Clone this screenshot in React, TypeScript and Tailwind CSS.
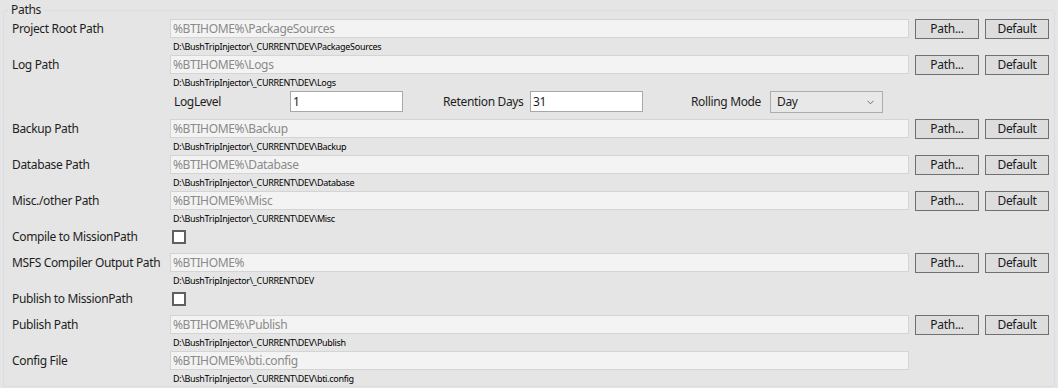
import React from 'react';

const font = { fontFamily: '"Noto Sans", "Open Sans", sans-serif' };

type PathItem = {
  kind: 'path';
  label: string;
  value: string;
  resolved: string;
  buttons: boolean;
};
type CheckItem = { kind: 'check'; label: string };
type LogItem = { kind: 'log' };
type Row = PathItem | CheckItem | LogItem;

const base = 'D:\\BushTripInjector\\_CURRENT\\DEV';

const rows: Row[] = [
  { kind: 'path', label: 'Project Root Path', value: '%BTIHOME%\\PackageSources', resolved: base + '\\PackageSources', buttons: true },
  { kind: 'path', label: 'Log Path', value: '%BTIHOME%\\Logs', resolved: base + '\\Logs', buttons: true },
  { kind: 'log' },
  { kind: 'path', label: 'Backup Path', value: '%BTIHOME%\\Backup', resolved: base + '\\Backup', buttons: true },
  { kind: 'path', label: 'Database Path', value: '%BTIHOME%\\Database', resolved: base + '\\Database', buttons: true },
  { kind: 'path', label: 'Misc./other Path', value: '%BTIHOME%\\Misc', resolved: base + '\\Misc', buttons: true },
  { kind: 'check', label: 'Compile to MissionPath' },
  { kind: 'path', label: 'MSFS Compiler Output Path', value: '%BTIHOME%', resolved: base, buttons: true },
  { kind: 'check', label: 'Publish to MissionPath' },
  { kind: 'path', label: 'Publish Path', value: '%BTIHOME%\\Publish', resolved: base + '\\Publish', buttons: true },
  { kind: 'path', label: 'Config File', value: '%BTIHOME%\\bti.config', resolved: base + '\\bti.config', buttons: false },
];

function WinButton({ children }: { children: React.ReactNode }) {
  return (
    <button className="ml-[6px] h-[20px] w-[64px] border border-[#707070] bg-[#dddddd] text-[12px] leading-[18px] tracking-[-0.3px] text-[#1a1a1a]">
      {children}
    </button>
  );
}

function PathRow({ item }: { item: PathItem }) {
  return (
    <div className="flex flex-col">
      <div className="flex h-[20px] items-start">
        <div className="w-[158px] text-[12px] leading-[19px] tracking-[-0.35px] text-[#1e1e1e]">{item.label}</div>
        <div className="h-[19px] w-[739px] border border-[#d4d4d4] bg-[#f3f3f3] pl-[2px] text-[12px] leading-[17px] tracking-[-0.35px] text-[#8a8a8a]">
          {item.value}
        </div>
        {item.buttons && (
          <>
            <WinButton>Path...</WinButton>
            <WinButton>Default</WinButton>
          </>
        )}
      </div>
      <div className="h-[16px] pl-[161px] text-[9px] leading-[16px] tracking-[-0.3px] text-black">{item.resolved}</div>
    </div>
  );
}

function CheckRow({ item }: { item: CheckItem }) {
  return (
    <div className="flex h-[26px] items-start">
      <div className="w-[158px] text-[12px] leading-[20px] tracking-[-0.35px] text-[#1e1e1e]">{item.label}</div>
      <div className="flex h-[20px] items-center pl-[2px]">
        <div className="h-[14px] w-[14px] border-2 border-[#606060] bg-white" />
      </div>
    </div>
  );
}

function LogRow() {
  return (
    <div className="flex h-[28px] items-start pl-[160px] text-[12px] tracking-[-0.35px] text-[#1e1e1e]">
      <div className="w-[118px] pl-[2px] leading-[21px]">LogLevel</div>
      <div className="h-[21px] w-[113px] border border-[#a8a8a8] bg-white pl-[2px] leading-[19px]">1</div>
      <div className="ml-[40px] w-[87px] leading-[21px]">Retention Days</div>
      <div className="h-[21px] w-[113px] border border-[#a8a8a8] bg-white pl-[2px] leading-[19px]">31</div>
      <div className="ml-[48px] w-[79px] leading-[21px]">Rolling Mode</div>
      <div className="flex h-[22px] w-[113px] items-center justify-between border border-[#acacac] bg-[#e8e8e8] pl-[6px] pr-[8px] leading-[20px]">
        <span>Day</span>
        <svg width="7" height="5" viewBox="0 0 7 5">
          <path d="M0.5 0.8 L3.5 3.8 L6.5 0.8" fill="none" stroke="#707070" strokeWidth="1" />
        </svg>
      </div>
    </div>
  );
}

export default function App() {
  return (
    <div className="h-[388px] w-[1058px] bg-[#e5e5e5] px-[3px] pt-px" style={font}>
      <fieldset className="h-[386px] rounded-[3px] border border-[#d5dfe5] pl-2 pr-[3px]">
        <legend className="-ml-1 px-[3px] text-[12px] leading-[18px] tracking-[-0.3px] text-[#1e1e1e]">Paths</legend>
        <div className="flex flex-col">
          {rows.map((row, i) => {
            if (row.kind === 'path') return <PathRow key={i} item={row} />;
            if (row.kind === 'check') return <CheckRow key={i} item={row} />;
            return <LogRow key={i} />;
          })}
        </div>
      </fieldset>
    </div>
  );
}
